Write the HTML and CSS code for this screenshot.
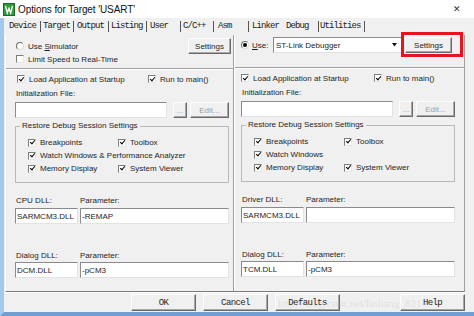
FILE: index.html
```html
<!DOCTYPE html>
<html lang="en">
<head>
  <meta charset="UTF-8" />
  <title>Options for Target 'USART'</title>
  <link rel="stylesheet" href="styles.css">
</head>
<body>
  <div class="window">
    <div class="titlebar">
      <svg class="app-icon" width="12" height="13" viewBox="0 0 12 13">
        <rect x="0.5" y="0.5" width="11" height="12" fill="#2f9a3c" stroke="#1d6b27"/>
        <polyline points="2.5,3 4.3,10 6,5.5 7.7,10 9.5,3" fill="none" stroke="#fff" stroke-width="1.4"/>
      </svg>
      <span class="title">Options for Target 'USART'</span>
      <span class="close">&#x2715;</span>
    </div>

    <div class="frame">
      <!-- Tabs -->
      <div class="tabs">
        <span class="tab t-device">Device</span>
        <span class="tab t-target">Target</span>
        <span class="tab t-output">Output</span>
        <span class="tab t-listing">Listing</span>
        <span class="tab t-user">User</span>
        <span class="tab t-cc">C/C++</span>
        <span class="tab t-asm">Asm</span>
        <span class="tab t-linker">Linker</span>
        <span class="tab t-debug">Debug</span>
        <span class="tab t-util">Utilities</span>
      </div>

      <div class="panel">
        <!-- Simulator side -->
        <div class="col col-left">
          <div class="top">
            <div class="row row-use">
              <span class="radio"></span>
              <span class="txt">Use <u>S</u>imulator</span>
              <button class="btn btn-settings">Settings</button>
            </div>
            <div class="row row-limit">
              <span class="chk"></span>
              <span class="txt">Limit Speed to Real-Time</span>
            </div>
          </div>
          <div class="sep"></div>
          <div class="bottom">
            <div class="row chk-row">
              <span class="cell-load"><span class="chk on"></span><span class="txt">Load Application at Startup</span></span>
              <span class="chk on"></span><span class="txt">Run to main()</span>
            </div>
            <div class="label">Initialization File:</div>
            <div class="row file-row">
              <span class="field file-field"></span>
              <button class="btn btn-dots" disabled>...</button>
              <button class="btn btn-edit" disabled>Edit...</button>
            </div>
            <fieldset class="group">
              <legend>Restore Debug Session Settings</legend>
              <div class="grow"><span class="gcell"><span class="chk on"></span><span class="txt">Breakpoints</span></span><span class="chk on"></span><span class="txt">Toolbox</span></div>
              <div class="grow"><span class="chk on"></span><span class="txt">Watch Windows &amp; Performance Analyzer</span></div>
              <div class="grow"><span class="gcell"><span class="chk on"></span><span class="txt">Memory Display</span></span><span class="chk on"></span><span class="txt">System Viewer</span></div>
            </fieldset>
            <div class="dll-labels"><span class="dll-name">CPU DLL:</span><span>Parameter:</span></div>
            <div class="row dll-row"><span class="field dll-field">SARMCM3.DLL</span><span class="field param-field">-REMAP</span></div>
            <div class="dll-labels second"><span class="dll-name">Dialog DLL:</span><span>Parameter:</span></div>
            <div class="row dll-row second"><span class="field dll-field">DCM.DLL</span><span class="field param-field">-pCM3</span></div>
          </div>
        </div>

        <div class="divider"></div>

        <!-- Debugger side -->
        <div class="col col-right">
          <div class="top">
            <div class="row row-use">
              <span class="radio on"></span>
              <span class="txt txt-use"><u>U</u>se:</span>
              <span class="field combo">
                <span class="combo-text">ST-Link Debugger</span>
                <svg class="combo-arrow" width="5" height="4" viewBox="0 0 5 4"><polygon points="0,0 5,0 2.5,3.5" fill="#111"/></svg>
              </span>
              <button class="btn btn-settings">Settings</button>
            </div>
            <div class="row row-limit"></div>
          </div>
          <div class="sep"></div>
          <div class="bottom">
            <div class="row chk-row">
              <span class="cell-load"><span class="chk on"></span><span class="txt">Load Application at Startup</span></span>
              <span class="chk on"></span><span class="txt">Run to main()</span>
            </div>
            <div class="label">Initialization File:</div>
            <div class="row file-row">
              <span class="field file-field"></span>
              <button class="btn btn-dots" disabled>...</button>
              <button class="btn btn-edit" disabled>Edit...</button>
            </div>
            <fieldset class="group">
              <legend>Restore Debug Session Settings</legend>
              <div class="grow"><span class="gcell"><span class="chk on"></span><span class="txt">Breakpoints</span></span><span class="chk on"></span><span class="txt">Toolbox</span></div>
              <div class="grow"><span class="chk on"></span><span class="txt">Watch Windows</span></div>
              <div class="grow"><span class="gcell"><span class="chk on"></span><span class="txt">Memory Display</span></span><span class="chk on"></span><span class="txt">System Viewer</span></div>
            </fieldset>
            <div class="dll-labels"><span class="dll-name">Driver DLL:</span><span>Parameter:</span></div>
            <div class="row dll-row"><span class="field dll-field">SARMCM3.DLL</span><span class="field param-field"></span></div>
            <div class="dll-labels second"><span class="dll-name">Dialog DLL:</span><span>Parameter:</span></div>
            <div class="row dll-row second"><span class="field dll-field">TCM.DLL</span><span class="field param-field">-pCM3</span></div>
          </div>
        </div>
      </div>

      <!-- Dialog buttons -->
      <div class="buttons">
        <button class="btn dbtn">OK</button>
        <button class="btn dbtn">Cancel</button>
        <button class="btn dbtn">Defaults</button>
        <button class="btn dbtn btn-help">Help</button>
      </div>
    </div>

    <div class="highlight"></div>
    <div class="watermark">http://blog.csdn.net/linliang_821</div>
  </div>
</body>
</html>
```

FILE: styles.css
```css
html, body {
  margin: 0;
  padding: 0;
}

body {
  width: 474px;
  height: 316px;
  overflow: hidden;
  background-color: #f0f0f0;
  font-family: "Liberation Sans", Arial, sans-serif;
  font-size: 8px;
  color: #1e1e1e;
}

.window {
  position: relative;
  height: 316px;
  display: flex;
  flex-direction: column;
}

.titlebar {
  height: 18px;
  flex-shrink: 0;
  display: flex;
  align-items: center;
  background-color: #fff;
}

.app-icon {
  margin-left: 3px;
}

.title {
  margin-left: 3px;
  font-size: 10px;
  letter-spacing: -0.1px;
  color: #111;
}

.close {
  margin-left: auto;
  margin-right: 13px;
  font-size: 9px;
  color: #333;
}

.frame {
  flex: 1;
  display: flex;
  flex-direction: column;
  border-left: 4px solid #a3c9ea;
  border-bottom: 4px solid #6f9fd0;
}

/* tabs */
.tabs {
  height: 17px;
  flex-shrink: 0;
  display: flex;
  align-items: center;
  padding-left: 1px;
  font-family: "Liberation Mono", monospace;
  font-size: 9px;
  letter-spacing: -0.9px;
  color: #222;
}

.tab {
  box-sizing: border-box;
  height: 11px;
  line-height: 11px;
  border-right: 1px solid #555;
  white-space: nowrap;
}

.t-device { width: 36px; padding-left: 4px; }
.t-target { width: 33px; padding-left: 2px; }
.t-output { width: 35px; padding-left: 3px; }
.t-listing { width: 38px; padding-left: 2px; }
.t-user { width: 34px; padding-left: 3px; }
.t-cc { width: 33px; padding-left: 2px; }
.t-asm { width: 35px; padding-left: 4px; }
.t-linker { width: 35px; padding-left: 3px; border-right: none; }
.t-debug { width: 35px; padding-left: 2px; margin-top: -1px; }
.t-util { width: 46px; padding-left: 1px; }

/* tab page */
.panel {
  margin-left: 1px;
  width: 458px;
  height: 256px;
  flex-shrink: 0;
  display: flex;
  border-left: 1px solid #fff;
  border-right: 1px solid #a0a0a0;
  border-bottom: 1px solid #7a7a7a;
  box-shadow: 0 1px 0 #fff;
}

.col-left {
  width: 227px;
}

.col-right {
  width: 229px;
}

.divider {
  width: 1px;
  border-left: 1px solid #a0a0a0;
  background-color: #fff;
}

.row {
  display: flex;
  align-items: center;
}

.txt {
  margin-left: 4px;
  white-space: nowrap;
}

.col-left .top {
  padding-left: 10px;
}

.col-right .top {
  padding-left: 6px;
}

.row-use {
  margin-top: 3px;
  height: 16px;
}

.col-right .row-use {
  margin-top: 2px;
}

.row-limit {
  height: 10px;
}

.sep {
  margin-top: 4px;
  height: 1px;
  background-color: #a0a0a0;
  border-bottom: 1px solid #fff;
}

.col-left .bottom {
  padding-left: 9px;
}

.col-right .bottom {
  padding-left: 6px;
}

/* checkboxes and radios */
.chk {
  box-sizing: border-box;
  width: 8px;
  height: 8px;
  flex-shrink: 0;
  display: flex;
  justify-content: center;
  align-items: center;
  background-color: #fff;
  border: 1px solid;
  border-color: #7d7d7d #e6e6e6 #e6e6e6 #7d7d7d;
}

.chk.on::after {
  content: "";
  width: 2px;
  height: 4px;
  margin-top: -2px;
  border-right: 1.3px solid #000;
  border-bottom: 1.3px solid #000;
  transform: rotate(40deg);
}

.radio {
  box-sizing: border-box;
  width: 8px;
  height: 8px;
  flex-shrink: 0;
  display: flex;
  justify-content: center;
  align-items: center;
  border-radius: 50%;
  background-color: #fff;
  border: 1px solid;
  border-color: #6d6d6d #dcdcdc #dcdcdc #6d6d6d;
}

.radio.on::after {
  content: "";
  width: 4px;
  height: 4px;
  border-radius: 50%;
  background-color: #000;
}

/* buttons and fields */
.btn {
  box-sizing: border-box;
  margin: 0;
  padding: 0;
  height: 16px;
  font-family: "Liberation Sans", Arial, sans-serif;
  font-size: 8px;
  color: #1e1e1e;
  background-color: #f0f0f0;
  border: 1px solid;
  border-color: #fdfdfd #6a6a6a #6a6a6a #fdfdfd;
  box-shadow: inset -1px -1px 0 #a8a8a8;
}

.btn:disabled {
  color: #a0a0a0;
}

.btn-settings {
  margin-left: auto;
  margin-right: 2px;
  width: 43px;
}

.col-right .btn-settings {
  margin-left: 3px;
  margin-right: 0;
  width: 47px;
}

.field {
  box-sizing: border-box;
  height: 16px;
  padding-left: 1px;
  display: flex;
  align-items: center;
  background-color: #fff;
  border: 1px solid;
  border-color: #8a8a8a #e3e3e3 #e3e3e3 #8a8a8a;
  white-space: nowrap;
  color: #1e1e1e;
}

.txt-use {
  width: 21px;
  margin-left: 3px;
}

.combo {
  width: 129px;
  padding-left: 2px;
  padding-right: 4px;
}

.combo-arrow {
  margin-left: auto;
}

.chk-row {
  margin-top: 4px;
  height: 10px;
}

.col-left .chk-row {
  padding-left: 2px;
}

.cell-load {
  display: flex;
  align-items: center;
  width: 131px;
}

.col-right .cell-load {
  width: 133px;
}

.label {
  margin-top: 5px;
  padding-left: 1px;
  line-height: 10px;
}

.file-row {
  margin-top: 3px;
  height: 16px;
}

.file-field {
  width: 152px;
}

.btn-dots {
  margin-left: 6px;
  width: 14px;
}

.btn-edit {
  margin-left: 3px;
  width: 39px;
}

/* group box */
.group {
  box-sizing: border-box;
  width: 214px;
  margin: 3px 0 0 0;
  padding: 5px 0 7px 4px;
  border: 1px solid #b9b9b9;
}

.group legend {
  padding: 0 2px;
  line-height: 10px;
  font-size: 8px;
}

.grow {
  height: 13px;
  padding-left: 8px;
  display: flex;
  align-items: center;
}

.gcell {
  display: flex;
  align-items: center;
  width: 90px;
}

/* DLL rows */
.dll-labels {
  margin-top: 13px;
  display: flex;
  line-height: 10px;
}

.dll-labels.second {
  margin-top: 27px;
}

.dll-name {
  width: 64px;
  padding-left: 1px;
}

.dll-row {
  margin-top: 2px;
  height: 16px;
}

.dll-row.second {
  margin-top: 1px;
}

.dll-field {
  width: 63px;
}

.param-field {
  margin-left: 2px;
  width: 149px;
}

/* dialog buttons */
.buttons {
  height: 20px;
  display: flex;
  padding-left: 127px;
}

.dbtn {
  margin-top: 2px;
  margin-right: 7px;
  width: 65px;
  height: 17px;
  font-family: "Liberation Mono", monospace;
  font-size: 9px;
  letter-spacing: -0.6px;
}

.btn-help {
  margin-left: 53px;
  margin-right: 0;
}

/* annotation over the Settings button */
.highlight {
  position: absolute;
  left: 401px;
  top: 32px;
  width: 62px;
  height: 25px;
  box-sizing: border-box;
  border: 3px solid #e8141b;
}

.watermark {
  position: absolute;
  left: 278px;
  top: 297px;
  font-family: "Liberation Serif", serif;
  font-size: 11px;
  color: rgba(150, 150, 150, 0.2);
  pointer-events: none;
  white-space: nowrap;
}
```
